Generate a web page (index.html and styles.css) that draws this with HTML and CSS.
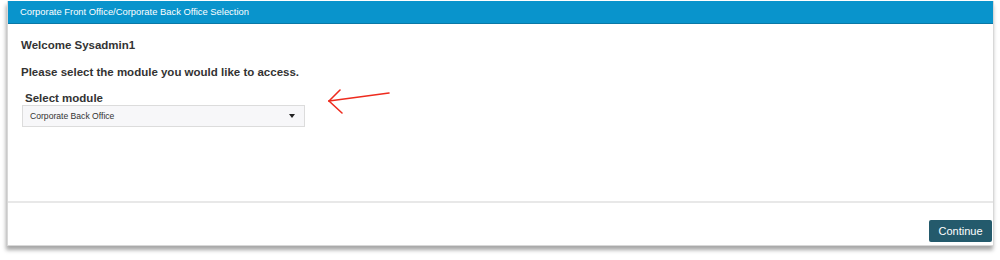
FILE: index.html
```html
<!DOCTYPE html>
<html>
<head>
<meta charset="utf-8">
<link rel="stylesheet" href="styles.css">
</head>
<body>
<div class="panel">
  <div class="panel-header">Corporate Front Office/Corporate Back Office Selection</div>
  <div class="panel-body">
    <div class="welcome">Welcome Sysadmin1</div>
    <div class="prompt">Please select the module you would like to access.</div>
    <div class="field">
      <div class="field-label">Select module</div>
      <div class="select">
        <span>Corporate Back Office</span>
        <span class="caret"></span>
      </div>
    </div>
  </div>
  <div class="panel-footer">
    <button class="btn">Continue</button>
  </div>
</div>
<svg class="annot" width="70" height="30" viewBox="0 0 70 30">
  <g stroke="#ee2b1e" stroke-width="1.6" fill="none" stroke-linecap="round">
    <path d="M68 4 L8 12"/>
    <path d="M8 12 L19 1"/>
    <path d="M8 12 L21 24"/>
  </g>
</svg>
</body>
</html>
```
FILE: styles.css
```css
html, body {
  margin: 0;
  padding: 0;
  background: #ffffff;
}
body {
  font-family: "Liberation Sans", Arial, sans-serif;
  color: #333333;
  position: relative;
  width: 1000px;
  height: 260px;
  overflow: hidden;
}
.panel {
  margin: 1px 0 0 7px;
  width: 985px;
  height: 244px;
  border: 1px solid #d8d8d8;
  border-top: none;
  box-shadow: -1px 4px 4px rgba(0,0,0,0.35);
  display: flex;
  flex-direction: column;
  background: #fff;
}
.panel-header {
  height: 22px;
  background: #0994cc;
  border-bottom: 1px solid #0a78a6;
  color: #ffffff;
  font-size: 9.4px;
  line-height: 22px;
  padding-left: 12px;
}
.panel-body {
  flex: 1;
  padding: 14px 13px 0 13px;
}
.welcome {
  font-size: 11.5px;
  font-weight: bold;
  line-height: 14px;
}
.prompt {
  font-size: 11.5px;
  font-weight: bold;
  line-height: 14px;
  margin-top: 13px;
}
.field {
  margin-top: 12px;
  margin-left: 1px;
  width: 283px;
}
.field-label {
  font-size: 11.5px;
  font-weight: bold;
  line-height: 14px;
  padding-left: 3px;
}
.select {
  height: 20px;
  border: 1px solid #dcdcdc;
  background: #f7f7f9;
  display: flex;
  align-items: center;
  justify-content: space-between;
  padding: 0 9px 0 7px;
  font-size: 8.6px;
  color: #333;
}
.caret {
  width: 0;
  height: 0;
  border-left: 3.5px solid transparent;
  border-right: 3.5px solid transparent;
  border-top: 4px solid #222;
}
.panel-footer {
  height: 39px;
  border-top: 2px solid #e8e8e8;
  display: flex;
  justify-content: flex-end;
  align-items: flex-end;
  padding: 0 1px 3px 0;
}
.btn {
  width: 63px;
  height: 22px;
  background: #245a6c;
  color: #ffffff;
  border: none;
  border-radius: 2px;
  font-family: "Liberation Sans", Arial, sans-serif;
  font-size: 11px;
  padding: 0;
}
.annot {
  position: absolute;
  left: 321px;
  top: 89px;
}
```
